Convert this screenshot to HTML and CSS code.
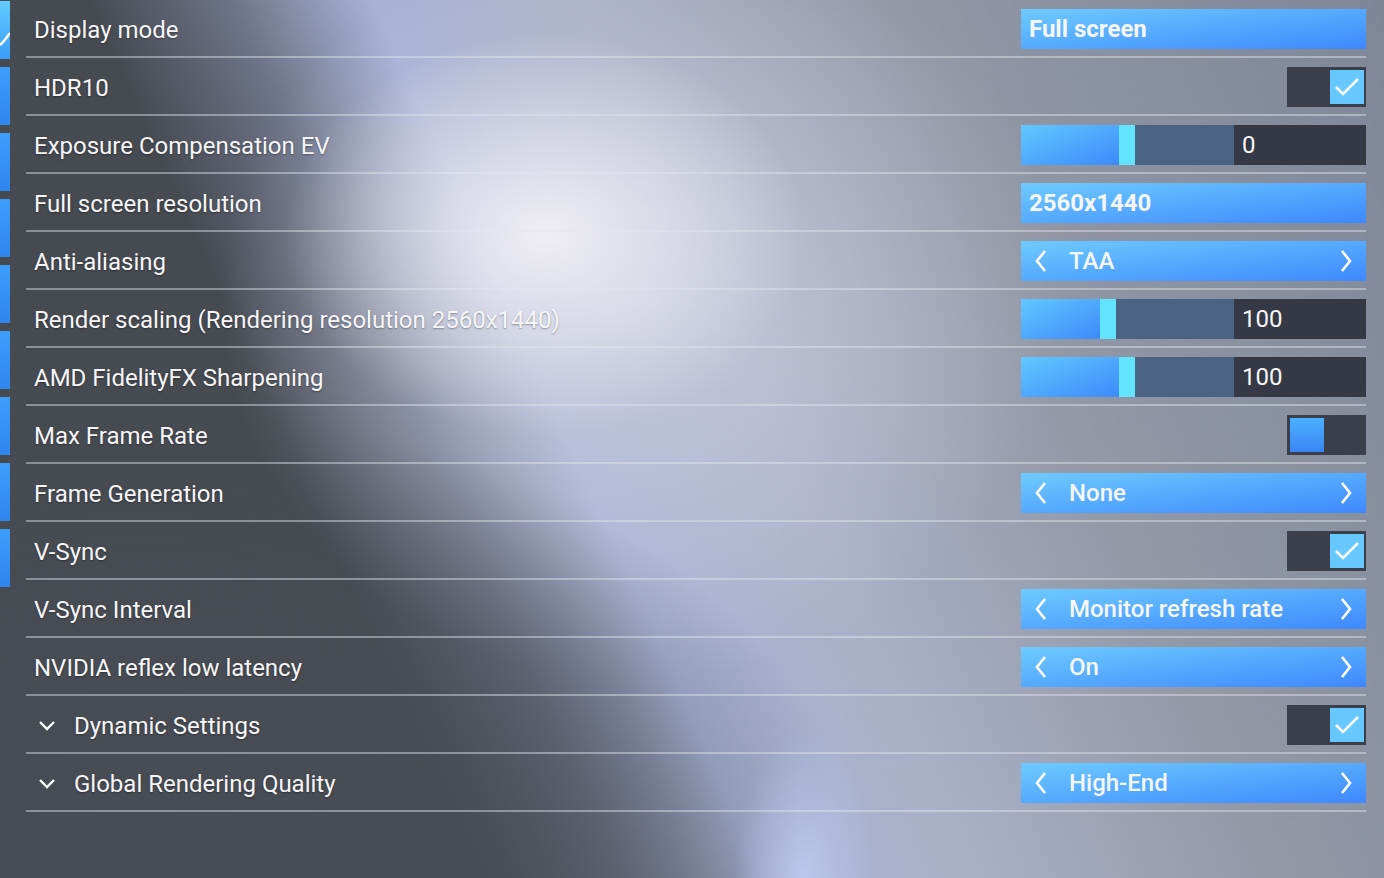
FILE: index.html
```html
<!DOCTYPE html>
<html>
<head>
	<title>Graphics Settings</title>
	<meta charset="UTF-8">
	<link rel="stylesheet" href="styles.css">
</head>
<body>
	<div class="screen">
		<div class="tabs">
			<span class="tab tab_first">
				<svg width="10" height="58" viewBox="0 0 10 58"><polyline points="0,44 4,40 10,32" fill="none" stroke="#ffffff" stroke-width="2.5"/></svg>
			</span>
			<span class="tab"></span>
			<span class="tab"></span>
			<span class="tab"></span>
			<span class="tab"></span>
			<span class="tab"></span>
			<span class="tab"></span>
			<span class="tab"></span>
			<span class="tab"></span>
		</div>

		<div class="settings">
			<div class="row">
				<span class="label">Display mode</span>
				<div class="select select_plain">Full screen</div>
			</div>
			<div class="row">
				<span class="label">HDR10</span>
				<div class="toggle toggle_on"><span class="knob"><svg width="34" height="34" viewBox="0 0 34 34"><polyline points="6,17 13,24 28,9" fill="none" stroke="#ffffff" stroke-width="2.5"/></svg></span></div>
			</div>
			<div class="row">
				<span class="label">Exposure Compensation EV</span>
				<div class="slider">
					<span class="fill" style="width: 98px"></span><span class="handle"></span><span class="track"></span><span class="value">0</span>
				</div>
			</div>
			<div class="row">
				<span class="label">Full screen resolution</span>
				<div class="select select_plain">2560x1440</div>
			</div>
			<div class="row">
				<span class="label">Anti-aliasing</span>
				<div class="select">
					<svg class="arrow" width="14" height="24" viewBox="0 0 14 24"><polyline points="11,2 3,12 11,22" fill="none" stroke="#ffffff" stroke-width="2.6"/></svg>
					<span class="select_text">TAA</span>
					<svg class="arrow" width="14" height="24" viewBox="0 0 14 24"><polyline points="3,2 11,12 3,22" fill="none" stroke="#ffffff" stroke-width="2.6"/></svg>
				</div>
			</div>
			<div class="row">
				<span class="label">Render scaling (Rendering resolution 2560x1440)</span>
				<div class="slider">
					<span class="fill" style="width: 79px"></span><span class="handle"></span><span class="track"></span><span class="value">100</span>
				</div>
			</div>
			<div class="row">
				<span class="label">AMD FidelityFX Sharpening</span>
				<div class="slider">
					<span class="fill" style="width: 98px"></span><span class="handle"></span><span class="track"></span><span class="value">100</span>
				</div>
			</div>
			<div class="row">
				<span class="label">Max Frame Rate</span>
				<div class="toggle"><span class="knob"></span></div>
			</div>
			<div class="row">
				<span class="label">Frame Generation</span>
				<div class="select">
					<svg class="arrow" width="14" height="24" viewBox="0 0 14 24"><polyline points="11,2 3,12 11,22" fill="none" stroke="#ffffff" stroke-width="2.6"/></svg>
					<span class="select_text">None</span>
					<svg class="arrow" width="14" height="24" viewBox="0 0 14 24"><polyline points="3,2 11,12 3,22" fill="none" stroke="#ffffff" stroke-width="2.6"/></svg>
				</div>
			</div>
			<div class="row">
				<span class="label">V-Sync</span>
				<div class="toggle toggle_on"><span class="knob"><svg width="34" height="34" viewBox="0 0 34 34"><polyline points="6,17 13,24 28,9" fill="none" stroke="#ffffff" stroke-width="2.5"/></svg></span></div>
			</div>
			<div class="row">
				<span class="label">V-Sync Interval</span>
				<div class="select">
					<svg class="arrow" width="14" height="24" viewBox="0 0 14 24"><polyline points="11,2 3,12 11,22" fill="none" stroke="#ffffff" stroke-width="2.6"/></svg>
					<span class="select_text">Monitor refresh rate</span>
					<svg class="arrow" width="14" height="24" viewBox="0 0 14 24"><polyline points="3,2 11,12 3,22" fill="none" stroke="#ffffff" stroke-width="2.6"/></svg>
				</div>
			</div>
			<div class="row">
				<span class="label">NVIDIA reflex low latency</span>
				<div class="select">
					<svg class="arrow" width="14" height="24" viewBox="0 0 14 24"><polyline points="11,2 3,12 11,22" fill="none" stroke="#ffffff" stroke-width="2.6"/></svg>
					<span class="select_text">On</span>
					<svg class="arrow" width="14" height="24" viewBox="0 0 14 24"><polyline points="3,2 11,12 3,22" fill="none" stroke="#ffffff" stroke-width="2.6"/></svg>
				</div>
			</div>
			<div class="row">
				<span class="label label_group"><svg class="caret" width="18" height="12" viewBox="0 0 18 12"><polyline points="2,2 9,9 16,2" fill="none" stroke="#ffffff" stroke-width="2.4"/></svg>Dynamic Settings</span>
				<div class="toggle toggle_on"><span class="knob"><svg width="34" height="34" viewBox="0 0 34 34"><polyline points="6,17 13,24 28,9" fill="none" stroke="#ffffff" stroke-width="2.5"/></svg></span></div>
			</div>
			<div class="row">
				<span class="label label_group"><svg class="caret" width="18" height="12" viewBox="0 0 18 12"><polyline points="2,2 9,9 16,2" fill="none" stroke="#ffffff" stroke-width="2.4"/></svg>Global Rendering Quality</span>
				<div class="select">
					<svg class="arrow" width="14" height="24" viewBox="0 0 14 24"><polyline points="11,2 3,12 11,22" fill="none" stroke="#ffffff" stroke-width="2.6"/></svg>
					<span class="select_text">High-End</span>
					<svg class="arrow" width="14" height="24" viewBox="0 0 14 24"><polyline points="3,2 11,12 3,22" fill="none" stroke="#ffffff" stroke-width="2.6"/></svg>
				</div>
			</div>
		</div>
	</div>
</body>
</html>
```

FILE: styles.css
```css
html, body {
	margin: 0;
	height: 100%;
}

body {
	width: 1384px;
	height: 878px;
	overflow: hidden;
	font-family: Roboto, "Liberation Sans", sans-serif;
	color: #f6f6f8;
	background-color: #868c98;
	background-image:
		radial-gradient( ellipse 260px 200px at 545px 235px, rgba( 242, 240, 246, 0.95 ), rgba( 242, 240, 246, 0 ) ),
		radial-gradient( ellipse 70px 150px at 805px 878px, rgba( 190, 204, 240, 0.9 ), rgba( 190, 204, 240, 0 ) ),
		radial-gradient( ellipse 720px 470px at 140px 878px, rgba( 72, 76, 84, 1 ), rgba( 72, 76, 84, 0.6 ) 55%, rgba( 72, 76, 84, 0 ) ),
		radial-gradient( ellipse 420px 380px at 640px 300px, rgba( 200, 204, 222, 0.85 ), rgba( 200, 204, 222, 0 ) ),
		linear-gradient( 66deg, #464a51 0%, #464a51 27%, #6d7488 35%, #a8b2d6 43%, #aab0c6 55%, #9298a6 72%, #7e8698 100% );
}

.screen {
	display: flex;
	height: 100%;
}

/* left tab strip */
.tabs {
	width: 10px;
	display: flex;
	flex-direction: column;
	gap: 8px;
	padding-top: 1px;
}

.tab {
	display: block;
	height: 58px;
	background: linear-gradient( to bottom, #3e9dfb, #2f86ee );
}

.tab_first {
	background: linear-gradient( to bottom, #62cdff, #3a9cf8 );
}

.tab svg {
	display: block;
}

/* settings list */
.settings {
	margin-left: 16px;
	width: 1340px;
}

.row {
	height: 58px;
	box-sizing: border-box;
	padding: 3px 0 0 8px;
	display: flex;
	align-items: center;
	justify-content: space-between;
	border-bottom: 2px solid rgba( 226, 230, 240, 0.45 );
}

.label {
	font-size: 24px;
	text-shadow: 0 1px 2px rgba( 0, 0, 0, 0.35 );
	display: flex;
	align-items: center;
}

.label_group {
	padding-left: 4px;
}

.caret {
	margin-right: 18px;
}

/* selectors */
.select {
	width: 345px;
	height: 40px;
	box-sizing: border-box;
	display: flex;
	align-items: center;
	background: linear-gradient( to bottom right, #6dcbff, #3e88fd );
	font-size: 24px;
	font-weight: 500;
	padding: 0 13px 0 13px;
	margin-top: -1px;
}

.select_plain {
	font-weight: bold;
	padding-left: 8px;
}

.select_text {
	flex: 1;
	margin-left: 21px;
}

.arrow {
	display: block;
}

/* toggles */
.toggle {
	width: 79px;
	height: 40px;
	box-sizing: border-box;
	padding: 3px 2px 3px 3px;
	background-color: #3a3f4b;
	display: flex;
	margin-top: -1px;
}

.toggle_on {
	justify-content: flex-end;
}

.knob {
	display: block;
	width: 34px;
	height: 34px;
	background: linear-gradient( to bottom, #4cb0ff, #3a86f4 );
}

.toggle_on .knob {
	background: #66c8ff;
}

.knob svg {
	display: block;
}

/* sliders */
.slider {
	width: 345px;
	height: 40px;
	display: flex;
	margin-top: -1px;
}

.fill {
	display: block;
	background: linear-gradient( to bottom right, #62c8ff, #3d8afa );
}

.handle {
	display: block;
	width: 16px;
	background-color: #62e4ff;
}

.track {
	display: block;
	flex: 1;
	background-color: #4a6283;
}

.value {
	width: 132px;
	box-sizing: border-box;
	padding-left: 8px;
	background-color: #343945;
	font-size: 24px;
	line-height: 40px;
}
```
